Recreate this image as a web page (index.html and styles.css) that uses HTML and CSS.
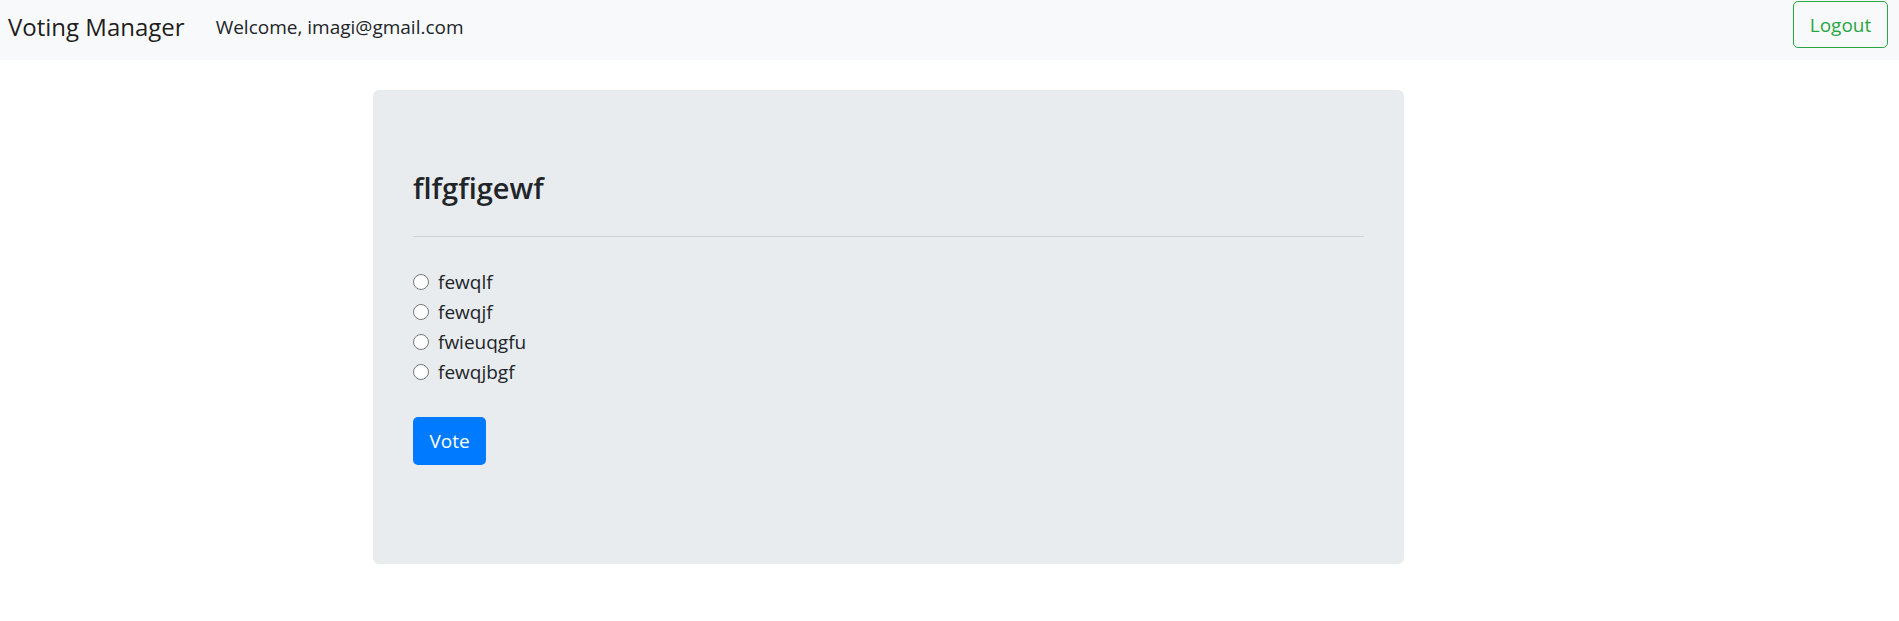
FILE: index.html
```html
<!DOCTYPE html>
<html lang="en">
<head>
    <meta charset="UTF-8">
    <meta name="viewport" content="width=device-width, initial-scale=1.0">
    <title>Voting Manager</title>
    <link rel="stylesheet" href="styles.css">
</head>
<body>
    <nav class="navbar">
        <span class="brand">Voting Manager</span>
        <span class="welcome">Welcome, imagi@gmail.com</span>
        <button type="button" class="btn-logout">Logout</button>
    </nav>

    <div class="page">
        <div class="jumbotron">
            <h3 class="poll-title">flfgfigewf</h3>
            <hr>
            <form id="vote-form">
                <label class="option"><input type="radio" name="choice" value="1"> fewqlf</label>
                <label class="option"><input type="radio" name="choice" value="2"> fewqjf</label>
                <label class="option"><input type="radio" name="choice" value="3"> fwieuqgfu</label>
                <label class="option"><input type="radio" name="choice" value="4"> fewqjbgf</label>
                <button type="submit" class="btn-vote">Vote</button>
            </form>
        </div>
    </div>
</body>
</html>
```

FILE: styles.css
```css
/* styles.css */

body {
    margin: 0;
    font-family: "Open Sans", "Noto Sans", sans-serif;
    font-size: 20px;
    line-height: 30px;
    color: #212529;
    background-color: #fff;
}

.navbar {
    display: flex;
    align-items: center;
    height: 60px;
    padding: 0 11px 6px 8px;
    background-color: #f8f9fa;
    box-sizing: border-box;
}

.brand {
    font-size: 24px;
    color: rgba(0, 0, 0, 0.9);
    margin-right: 31px;
}

.welcome {
    font-size: 19px;
    flex: 1;
}

.btn-logout {
    height: 47px;
    width: 95px;
    margin-top: -5px;
    font-family: inherit;
    font-size: 19px;
    color: #28a745;
    background: transparent;
    border: 1px solid #28a745;
    border-radius: 5px;
    cursor: pointer;
}

.page {
    padding: 30px 0 0 373px;
}

.jumbotron {
    width: 1031px;
    height: 474px;
    box-sizing: border-box;
    padding: 80px 40px;
    background-color: #e9ecef;
    border-radius: 6px;
}

.poll-title {
    margin: 0;
    font-size: 29px;
    font-weight: 600;
    line-height: 36px;
}

hr {
    margin: 30px 0 30px;
    border: 0;
    border-top: 1px solid rgba(0, 0, 0, 0.1);
}

.option {
    display: flex;
    align-items: center;
    font-size: 19px;
}

.option input {
    width: 16px;
    height: 16px;
    margin: 0 9px 0 0;
}

.btn-vote {
    margin-top: 30px;
    width: 73px;
    height: 48px;
    font-family: inherit;
    font-size: 19px;
    color: #fff;
    background-color: #007bff;
    border: none;
    border-radius: 5px;
    cursor: pointer;
}
```
